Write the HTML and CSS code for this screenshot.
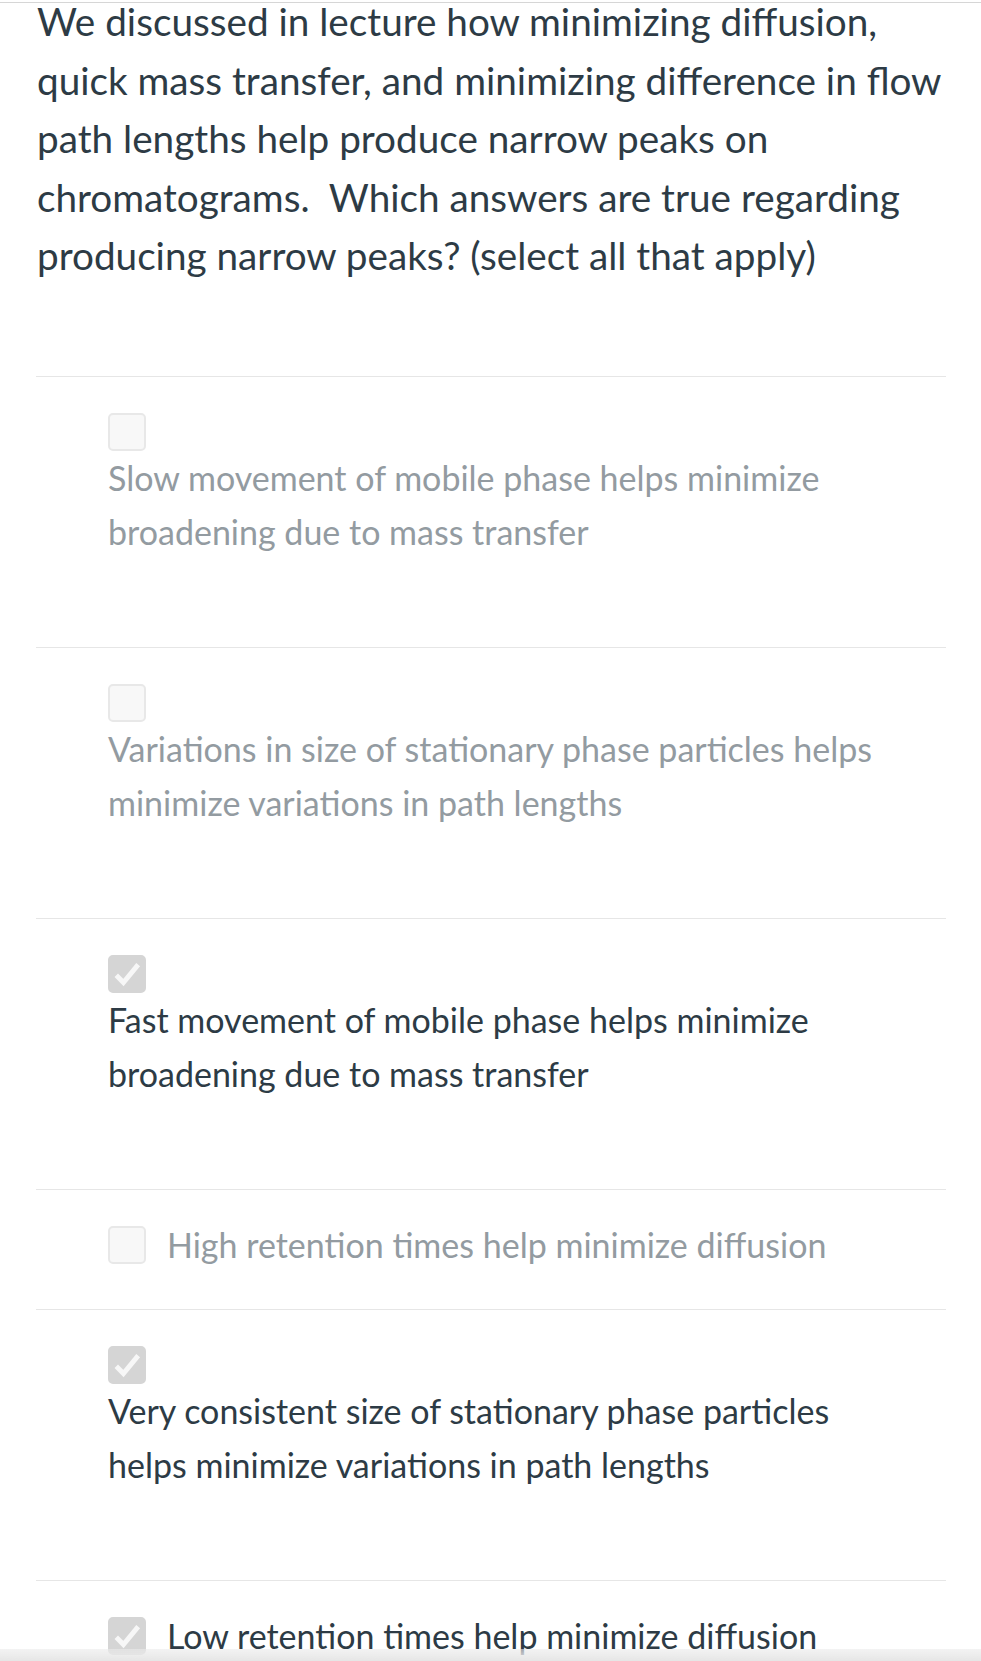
FILE: index.html
```html
<!DOCTYPE html>
<html lang="en">
<head>
<meta charset="utf-8">
<title>Quiz question</title>
<link rel="stylesheet" href="styles.css">
</head>
<body>
<div class="page">
  <div class="question">
    <p class="question-text">We discussed in lecture how minimizing diffusion, quick mass transfer, and minimizing difference in flow path lengths help produce narrow peaks on chromatograms.&nbsp; Which answers are true regarding producing narrow peaks? (select all that apply)</p>
    <div class="answers">
      <div class="answer">
        <span class="box"></span>
        <span class="label faded long">Slow movement of mobile phase helps minimize broadening due to mass transfer</span>
      </div>
      <div class="answer">
        <span class="box"></span>
        <span class="label faded long">Variations in size of stationary phase particles helps minimize variations in path lengths</span>
      </div>
      <div class="answer">
        <span class="box checked"><svg viewBox="0 0 38 38" width="34" height="34"><path d="M7 20.5 L15 28.5 L31.5 8.5" fill="none" stroke="#f7f7f7" stroke-width="5.5" stroke-linejoin="miter"/></svg></span>
        <span class="label long">Fast movement of mobile phase helps minimize broadening due to mass transfer</span>
      </div>
      <div class="answer">
        <span class="box"></span>
        <span class="label faded">High retention times help minimize diffusion</span>
      </div>
      <div class="answer">
        <span class="box checked"><svg viewBox="0 0 38 38" width="34" height="34"><path d="M7 20.5 L15 28.5 L31.5 8.5" fill="none" stroke="#f7f7f7" stroke-width="5.5" stroke-linejoin="miter"/></svg></span>
        <span class="label long">Very consistent size of stationary phase particles helps minimize variations in path lengths</span>
      </div>
      <div class="answer">
        <span class="box checked"><svg viewBox="0 0 38 38" width="34" height="34"><path d="M7 20.5 L15 28.5 L31.5 8.5" fill="none" stroke="#f7f7f7" stroke-width="5.5" stroke-linejoin="miter"/></svg></span>
        <span class="label">Low retention times help minimize diffusion</span>
      </div>
    </div>
  </div>
</div>
<div class="bottom-fade"></div>
</body>
</html>
```

FILE: styles.css
```css
html, body {
  margin: 0;
  padding: 0;
  background: #ffffff;
}

body {
  font-family: Lato, "Noto Sans", "Liberation Sans", sans-serif;
  color: #2d3b45;
  overflow: hidden;
  height: 1661px;
}

.page {
  border-top: 1px solid #d6d6d6;
  margin-top: 2px;
}

.question {
  padding: 0 35px 0 36px;
}

.question-text {
  margin: -11px -15px 0 0;
  font-size: 38.7px;
  line-height: 58.6px;
  padding-left: 1px;
}

.answers {
  margin-top: 91px;
}

.answer {
  border-top: 1.5px solid #e6e6e6;
  padding: 28px 56px 37px 72px;
  display: flex;
  flex-wrap: wrap;
  align-items: flex-start;
  column-gap: 21px;
}

.box {
  flex: none;
  box-sizing: border-box;
  width: 38px;
  height: 38px;
  margin-top: 8px;
  border: 2px solid #e8e8e8;
  border-radius: 5px;
  background: #f8f8f8;
  display: flex;
  align-items: center;
  justify-content: center;
}

.box.checked {
  background: #d5d5d5;
  border-color: #d5d5d5;
}

.label {
  font-size: 34px;
  line-height: 54px;
}

.label.faded {
  color: #939ba1;
}

.label.long {
  padding-bottom: 51px;
}

.bottom-fade {
  position: fixed;
  left: 0;
  right: 0;
  bottom: 0;
  height: 12px;
  background: linear-gradient(to bottom, rgba(235,235,235,0.6), #e6e6e6);
}
```
